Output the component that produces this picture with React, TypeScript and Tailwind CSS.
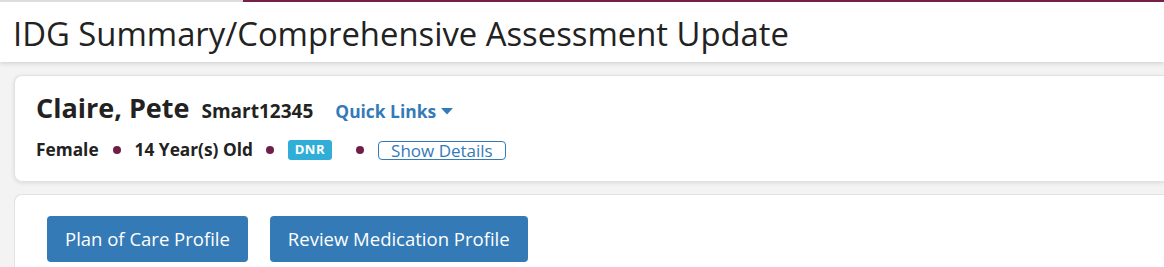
import React from "react";

export default function App() {
  return (
    <div className="w-[1164px] h-[267px] overflow-hidden bg-[#f3f3f3] font-['Open_Sans',sans-serif] text-[#222]">
      <div className="flex h-[2px]">
        <div className="w-[243px] bg-[#dcdcdc]" />
        <div className="flex-1 bg-[#74204b]" />
      </div>
      <div className="h-[60px] bg-white shadow-[0_2px_4px_rgba(0,0,0,0.12)] flex items-center pl-[13px] pt-[4px]">
        <h1 className="text-[32.8px] leading-none text-[#222]">IDG Summary/Comprehensive Assessment Update</h1>
      </div>
      <div className="pl-[14px] pt-[13px]">
        <div className="bg-white border border-[#e2e2e2] border-r-0 rounded-l-[8px] shadow-[0_1px_4px_rgba(0,0,0,0.1)] h-[107px] pl-[21px] pt-[12px]">
          <div className="flex items-baseline h-[38px]">
            <span className="text-[27px] font-bold text-[#222]">Claire, Pete</span>
            <span className="ml-[12px] text-[19px] font-bold text-[#222]">Smart12345</span>
            <span className="ml-[22px] text-[17.4px] font-bold text-[#337ab7] flex items-center">
              Quick Links
              <svg width="12" height="7" viewBox="0 0 12 7" className="ml-[5px]"><path d="M0 0h12L6 6.5z" fill="#337ab7" /></svg>
            </span>
          </div>
          <div className="flex items-center mt-[12px] h-[24px] text-[17.3px] font-bold text-[#222]">
            <span>Female</span>
            <span className="ml-[14px] w-[8px] h-[8px] rounded-full bg-[#6e1e47]" />
            <span className="ml-[14px]">14 Year(s) Old</span>
            <span className="ml-[13px] w-[8px] h-[8px] rounded-full bg-[#6e1e47]" />
            <span className="ml-[14px] h-[20px] w-[44px] rounded-[3px] bg-[#30aed8] text-white text-[13px] font-bold flex items-center justify-center tracking-[0.5px]">DNR</span>
            <span className="ml-[24px] w-[8px] h-[8px] rounded-full bg-[#6e1e47]" />
            <span className="ml-[14px] h-[19px] w-[128px] border border-[#337ab7] rounded-[4px] text-[#337ab7] text-[17px] font-normal flex items-center justify-center leading-none">Show Details</span>
          </div>
        </div>
        <div className="mt-[12px] bg-white border border-[#e2e2e2] border-r-0 rounded-tl-[8px] h-[80px] pl-[32px] pt-[21px] flex items-start gap-[22px]">
          <button className="h-[46px] px-[18px] rounded-[4px] bg-[#337ab7] text-white text-[18.5px]">Plan of Care Profile</button>
          <button className="h-[46px] px-[18px] rounded-[4px] bg-[#337ab7] text-white text-[18.5px]">Review Medication Profile</button>
        </div>
      </div>
    </div>
  );
}
